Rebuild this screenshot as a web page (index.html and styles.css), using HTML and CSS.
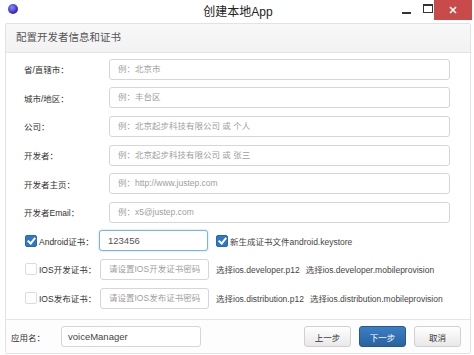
FILE: index.html
```html
<!DOCTYPE html>
<html lang="zh-CN">
<head>
    <meta charset="UTF-8">
    <title>创建本地App</title>
    <link rel="stylesheet" href="styles.css">
</head>
<body>
    <!-- Barra del titolo -->
    <div class="titlebar">
        <span class="app-icon"></span>
        <span class="title">创建本地App</span>
        <div class="win-buttons">
            <span class="win-min"></span>
            <span class="win-max"></span>
            <span class="win-close">
                <svg width="8" height="8" viewBox="0 0 8 8"><path d="M1 1L7 7M7 1L1 7" stroke="#fff" stroke-width="1.6"/></svg>
            </span>
        </div>
    </div>

    <div class="panel">
        <div class="panel-header">配置开发者信息和证书</div>

        <div class="panel-body">
            <div class="row">
                <label class="label">省/直辖市：</label>
                <div class="input wide placeholder">例：北京市</div>
            </div>
            <div class="row">
                <label class="label">城市/地区：</label>
                <div class="input wide placeholder">例：丰台区</div>
            </div>
            <div class="row">
                <label class="label">公司：</label>
                <div class="input wide placeholder">例：北京起步科技有限公司 或 个人</div>
            </div>
            <div class="row">
                <label class="label">开发者：</label>
                <div class="input wide placeholder">例：北京起步科技有限公司 或 张三</div>
            </div>
            <div class="row">
                <label class="label">开发者主页：</label>
                <div class="input wide placeholder">例：http://www.justep.com</div>
            </div>
            <div class="row">
                <label class="label">开发者Email：</label>
                <div class="input wide placeholder">例：x5@justep.com</div>
            </div>

            <!-- Certificati -->
            <div class="row cert">
                <span class="check checked"></span>
                <label class="cert-label">Android证书：</label>
                <div class="input short focus">123456</div>
                <span class="check checked second"></span>
                <span class="cert-text">新生成证书文件android.keystore</span>
            </div>
            <div class="row cert">
                <span class="check"></span>
                <label class="cert-label">IOS开发证书：</label>
                <div class="input short ios placeholder">请设置IOS开发证书密码</div>
                <span class="cert-text file">选择ios.developer.p12</span>
                <span class="cert-text">选择ios.developer.mobileprovision</span>
            </div>
            <div class="row cert">
                <span class="check"></span>
                <label class="cert-label">IOS发布证书：</label>
                <div class="input short ios placeholder">请设置IOS发布证书密码</div>
                <span class="cert-text file">选择ios.distribution.p12</span>
                <span class="cert-text">选择ios.distribution.mobileprovision</span>
            </div>
        </div>

        <div class="panel-footer">
            <label class="app-label">应用名：</label>
            <div class="input app-name">voiceManager</div>
            <div class="actions">
                <button class="btn">上一步</button>
                <button class="btn btn-primary">下一步</button>
                <button class="btn">取消</button>
            </div>
        </div>
    </div>
</body>
</html>
```

FILE: styles.css
```css
body {
    margin: 0;
    width: 474px;
    height: 355px;
    background-color: #ffffff;
    font-family: 'Liberation Sans', 'Noto Sans CJK SC', sans-serif;
    font-size: 8.5px;
    color: #333;
    overflow: hidden;
}

/* Barra del titolo */
.titlebar {
    height: 22px;
    display: flex;
    align-items: center;
}

.app-icon {
    width: 10px;
    height: 10px;
    margin-left: 8px;
    margin-top: -4px;
    border-radius: 50%;
    background: radial-gradient(circle at 40% 35%, #8a8cf0, #3a2fc8 60%, #241a90);
}

.title {
    flex: 1;
    text-align: center;
    font-size: 12px;
    color: #222;
    margin-top: -2px;
    padding-left: 56px;
}

.win-buttons {
    display: flex;
    align-items: flex-start;
    height: 22px;
}

.win-min {
    width: 9px;
    height: 2px;
    margin-top: 12px;
    background-color: #333;
}

.win-max {
    width: 8px;
    height: 6px;
    margin: 4px 0 0 12px;
    border: 1px solid #333;
    border-top-width: 2px;
}

.win-close {
    width: 38px;
    height: 20px;
    margin-left: 1px;
    margin-right: 2px;
    background-color: #c94a4a;
    display: flex;
    align-items: center;
    justify-content: center;
}

/* Pannello */
.panel {
    margin: 1px 3px 0 5px;
    height: 329px;
    border: 1px solid #e2e2e2;
    border-radius: 2px;
    display: flex;
    flex-direction: column;
}

.panel-header {
    height: 28px;
    line-height: 27px;
    padding-left: 10px;
    font-size: 10.5px;
    color: #555;
    background: linear-gradient(#f8f8f8, #f2f2f2);
    border-bottom: 1px solid #e4e4e4;
}

.panel-body {
    flex: 1;
    padding: 2px 20px 0 18px;
}

.row {
    height: 28.6px;
    display: flex;
    align-items: center;
    white-space: nowrap;
}

.label {
    width: 85px;
    flex-shrink: 0;
}

.input {
    height: 19px;
    line-height: 19px;
    border: 1px solid #d6d6d6;
    border-radius: 3px;
    padding-left: 8px;
    background-color: #fff;
    white-space: nowrap;
    overflow: hidden;
    flex-shrink: 0;
}

.input.wide {
    flex: 1;
}

.placeholder {
    color: #a0a0a0;
}

.input.short {
    width: 99px;
}

.input.ios {
    margin-left: 1px;
}

.input.focus {
    border-color: #7bb3e6;
    box-shadow: 0 0 2px rgba(102, 175, 233, 0.6);
    color: #555;
    font-size: 9.5px;
}

.check {
    width: 10px;
    height: 10px;
    border: 1px solid #dcdcdc;
    border-radius: 2px;
    margin-left: 1px;
    margin-right: 2px;
    background-color: #fff;
    position: relative;
    flex-shrink: 0;
}

.check.checked {
    background-color: #2f78c8;
    border-color: #2a68ad;
}

.check.checked::after {
    content: '';
    position: absolute;
    left: 3px;
    top: 0;
    width: 3px;
    height: 6px;
    border: solid #fff;
    border-width: 0 2px 2px 0;
    transform: rotate(40deg);
}

.check.second {
    margin-left: 8px;
}

.cert-label {
    width: 60px;
    flex-shrink: 0;
}

.cert-text {
    color: #444;
}

.cert-text.file {
    margin-left: 7px;
    margin-right: 6px;
}

/* Piè di pagina */
.panel-footer {
    height: 33px;
    border-top: 1px solid #e4e4e4;
    display: flex;
    align-items: center;
    padding: 0 9px 0 5px;
    background-color: #fdfdfd;
}

.app-label {
    width: 50px;
}

.input.app-name {
    width: 132px;
    padding-left: 6px;
    color: #444;
    font-size: 9.5px;
}

.actions {
    margin-left: auto;
    display: flex;
    gap: 8px;
}

.btn {
    width: 47px;
    height: 21px;
    font-family: inherit;
    font-size: 8.5px;
    color: #333;
    border: 1px solid #d0d0d0;
    border-radius: 3px;
    background: linear-gradient(#ffffff, #e8e8e8);
    padding: 0;
}

.btn-primary {
    color: #fff;
    border-color: #24598f;
    background: linear-gradient(#3a7fc4, #2a62a0);
}
```
